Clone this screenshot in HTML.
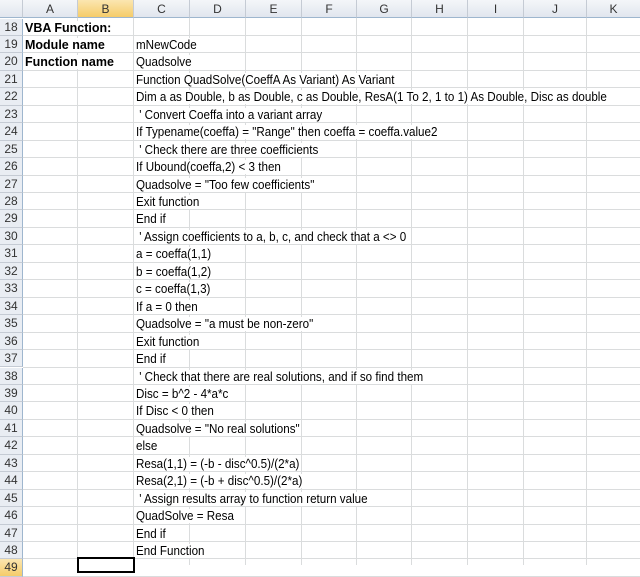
<!DOCTYPE html><html><head><style>
body{margin:0;width:640px;height:565px;overflow:hidden;background:#fff;font-family:"Liberation Sans",sans-serif;position:relative}
.hd{position:absolute;top:0;height:17px;background:linear-gradient(#f4f6f9,#e1e6ee);border-right:1px solid #c5cbd4;border-bottom:1px solid #9eb6ce;font-size:12px;color:#333;text-align:center;line-height:18px}
.rn{position:absolute;left:0;width:23px;background:#e9edf3;border-right:1px solid #9eb6ce;border-bottom:1px solid #c5cbd4;font-size:12px;color:#333;text-align:center;box-sizing:border-box}
.vl{position:absolute;top:18px;bottom:0;width:1px;background:#dadcdd}
.hl{position:absolute;left:23px;right:0;height:1px;background:#dadcdd}
.t{position:absolute;font-size:12.5px;color:#000;white-space:nowrap;background:#fff;line-height:14px}
.b{font-weight:bold}
</style></head><body>
<div id="g"></div>
<script>
(function(){
var cols=[["",0,23],["A",23,78],["B",78,134],["C",134,190],["D",190,246],["E",246,302],["F",302,357],["G",357,412],["H",412,468],["I",468,524],["J",524,587],["K",587,641]];
var h="";
cols.forEach(function(c,i){var st=i==2?"background:linear-gradient(#fbe6b0,#f5cc6a);":"";h+='<div class="hd" style="left:'+c[1]+'px;width:'+(c[2]-c[1]-1)+'px;'+st+'">'+c[0]+'</div>';if(i>0)h+='<div class="vl" style="left:'+(c[2]-1)+'px"></div>';});
var texts={18:["VBA Function:",1],19:["Module name",1,"mNewCode"],20:["Function name",1,"Quadsolve"],21:["",0,"Function QuadSolve(CoeffA As Variant) As Variant"],22:["",0,"Dim a as Double, b as Double, c as Double, ResA(1 To 2, 1 to 1) As Double, Disc as double"],23:["",0," ' Convert Coeffa into a variant array"],24:["",0,"If Typename(coeffa) = \"Range\" then coeffa = coeffa.value2"],25:["",0," ' Check there are three coefficients"],26:["",0,"If Ubound(coeffa,2) &lt; 3 then"],27:["",0,"Quadsolve = \"Too few coefficients\""],28:["",0,"Exit function"],29:["",0,"End if"],30:["",0," ' Assign coefficients to a, b, c, and check that a &lt;&gt; 0"],31:["",0,"a = coeffa(1,1)"],32:["",0,"b = coeffa(1,2)"],33:["",0,"c = coeffa(1,3)"],34:["",0,"If a = 0 then"],35:["",0,"Quadsolve = \"a must be non-zero\""],36:["",0,"Exit function"],37:["",0,"End if"],38:["",0," ' Check that there are real solutions, and if so find them"],39:["",0,"Disc = b^2 - 4*a*c"],40:["",0,"If Disc &lt; 0 then"],41:["",0,"Quadsolve = \"No real solutions\""],42:["",0,"else"],43:["",0,"Resa(1,1) = (-b - disc^0.5)/(2*a)"],44:["",0,"Resa(2,1) = (-b + disc^0.5)/(2*a)"],45:["",0," ' Assign results array to function return value"],46:["",0,"QuadSolve = Resa"],47:["",0,"End if"],48:["",0,"End Function"]};
for(var r=18;r<=49;r++){var yy=18.5+(r-18)*17.45,ht=17.45;var st=r==49?"background:linear-gradient(#fbe6b0,#f5cc6a);":"";
h+='<div class="rn" style="top:'+yy+'px;height:'+ht+'px;line-height:'+ht+'px;'+st+'">'+r+'</div>';
h+='<div class="hl" style="top:'+(yy+ht-1)+'px"></div>';
var t=texts[r];if(t){if(t[0])h+='<div class="t'+(t[1]?' b':'')+'" style="left:25px;top:'+(yy+2)+'px">'+t[0]+'</div>';if(t[2])h+='<div class="t" style="left:136px;top:'+(yy+2)+'px;transform:scaleX(0.93);transform-origin:left">'+t[2].replace(/^ /,"&nbsp;")+'</div>';}}
h+='<div style="position:absolute;left:77px;top:557px;width:54px;height:12px;border:2px solid #000"></div>';
document.getElementById("g").innerHTML=h;
})();
</script>
</body></html>
